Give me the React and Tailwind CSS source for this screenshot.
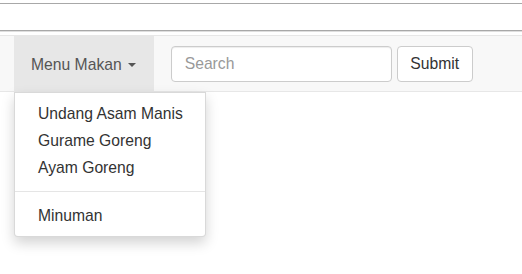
export default function App() {
  const font = { fontFamily: '"Liberation Sans", Arial, sans-serif' };
  return (
    <div className="w-[522px] h-[274px] bg-white overflow-hidden" style={font}>
      <div className="h-[3px] bg-white" />
      <div className="h-px bg-[#a8a8a8]" />
      <div className="h-[26px] bg-white" />
      <div className="h-px bg-[#a8a8a8]" />
      <div className="h-px bg-[#dedede]" />
      <div className="h-[3px] bg-white" />
      <div className="border-y border-[#e7e7e7] bg-[#f8f8f8] flex items-stretch pl-[14px]">
        <div className="relative h-[56px] -mb-px">
          <div className="h-[56px] bg-[#e7e7e7] flex items-center pt-px pl-[17px] pr-[18px] text-[15.7px] text-[#555]">
            <span>Menu Makan</span>
            <span className="ml-[6px] w-0 h-0 border-l-[4.5px] border-r-[4.5px] border-t-[4.5px] border-l-transparent border-r-transparent border-t-[#555] mt-px" />
          </div>
          <div className="absolute left-0 top-full w-[192px] bg-white border border-[rgba(0,0,0,0.15)] rounded-b-[4px] shadow-[0_6px_13px_rgba(0,0,0,0.175)] pt-[7px] pb-[7px] text-[15.7px] text-[#333] z-10">
            <div className="h-[27px] flex items-center pl-[23px] whitespace-nowrap">Undang Asam Manis</div>
            <div className="h-[27px] flex items-center pl-[23px] whitespace-nowrap">Gurame Goreng</div>
            <div className="h-[27px] flex items-center pl-[23px] whitespace-nowrap">Ayam Goreng</div>
            <div className="h-px bg-[#e5e5e5] mt-[10px] mb-[10px]" />
            <div className="h-[27px] flex items-center pl-[23px] whitespace-nowrap">Minuman</div>
          </div>
        </div>
        <div className="flex items-center ml-[17px] gap-[5px]">
          <div className="w-[221px] h-[36px] bg-white border border-[#ccc] rounded-[4px] flex items-center pl-[13px] text-[15.7px] text-[#999] shadow-[inset_0_1px_1px_rgba(0,0,0,0.075)]">
            Search
          </div>
          <div className="w-[76px] h-[36px] bg-white border border-[#ccc] rounded-[4px] flex items-center justify-center text-[15.7px] text-[#333]">
            Submit
          </div>
        </div>
      </div>
    </div>
  );
}
